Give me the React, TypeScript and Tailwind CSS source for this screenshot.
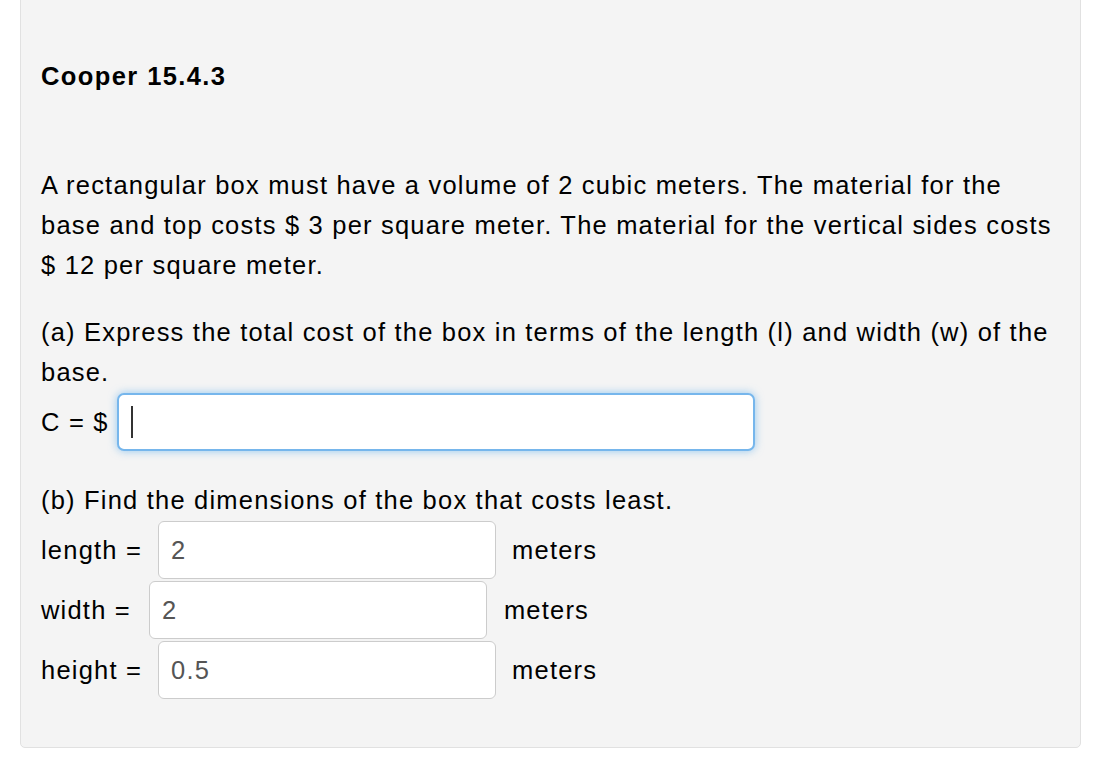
import React from "react";

const font = { fontFamily: '"Liberation Sans", Arial, Helvetica, sans-serif' };

function Row({ label, value, inputClass, unitClass }: { label: string; value: string; inputClass: string; unitClass: string }) {
  return (
    <div className="flex items-center h-[60px]">
      <span className="whitespace-pre">{label}</span>
      <div className={`h-[58px] bg-white border-[1.5px] border-[#cccccc] rounded-[6px] flex items-center pl-[12px] text-[#555555] ${inputClass}`}>
        {value}
      </div>
      <span className={unitClass}>meters</span>
    </div>
  );
}

export default function App() {
  return (
    <div className="w-[1120px] h-[772px] bg-white overflow-hidden text-black" style={font}>
      <div className="ml-[20px] w-[1061px] -mt-[10px] pt-[65px] pb-[47px] pl-[20px] pr-[10px] bg-[#f4f4f4] border border-[#e1e1e1] rounded-[5px] text-[25.5px] leading-[40px] tracking-[1.2px]">
        <div className="font-bold tracking-[1.4px]">Cooper 15.4.3</div>
        <p className="mt-[69px] whitespace-nowrap">
          A rectangular box must have a volume of 2 cubic meters. The material for the
          <br />
          base and top costs $ 3 per square meter. The material for the vertical sides costs
          <br />$ 12 per square meter.
        </p>
        <p className="mt-[27px] whitespace-nowrap">
          (a) Express the total cost of the box in terms of the length (l) and width (w) of the
          <br />
          base.
        </p>
        <div className="flex items-center mt-[1px]">
          <span className="whitespace-pre">C = $</span>
          <div className="ml-[8px] w-[638px] h-[58px] bg-white border-2 border-[#76b6ec] rounded-[7px] shadow-[0_0_8px_rgba(82,168,236,0.6)] flex items-center pl-[12px]">
            <span className="block w-[2px] h-[32px] bg-[#333333]"></span>
          </div>
        </div>
        <p className="mt-[29px]">(b) Find the dimensions of the box that costs least.</p>
        <div>
          <Row label="length =" value="2" inputClass="ml-[16px] w-[338px]" unitClass="ml-[16px]" />
          <Row label="width =" value="2" inputClass="ml-[18px] w-[338px]" unitClass="ml-[17px]" />
          <Row label="height =" value="0.5" inputClass="ml-[16px] w-[338px]" unitClass="ml-[16px]" />
        </div>
      </div>
    </div>
  );
}
